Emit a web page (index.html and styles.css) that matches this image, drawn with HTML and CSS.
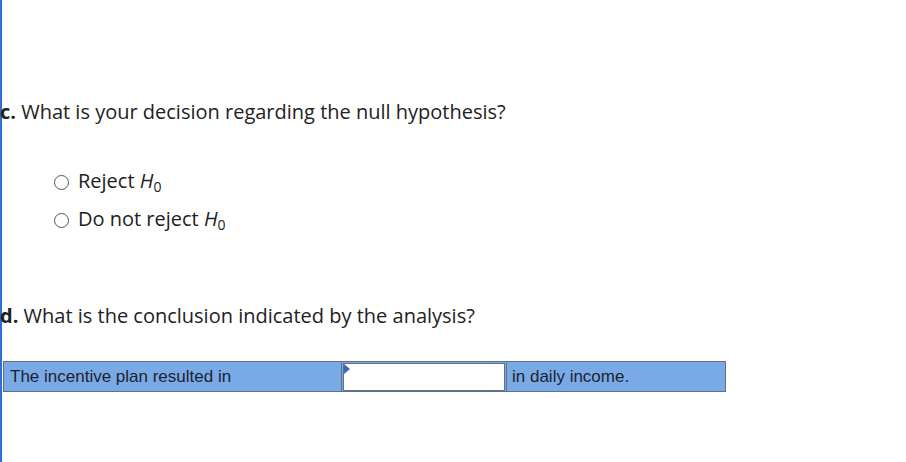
FILE: index.html
```html
<!DOCTYPE html>
<html>
<head>
<meta charset="utf-8">
<link rel="stylesheet" href="styles.css">
</head>
<body>
<div class="page">
  <div class="question q-c">
    <p class="prompt"><b>c.</b> What is your decision regarding the null hypothesis?</p>
    <ul class="options">
      <li class="option"><span class="radio"></span><span>Reject <i>H</i><sub>0</sub></span></li>
      <li class="option"><span class="radio"></span><span>Do not reject <i>H</i><sub>0</sub></span></li>
    </ul>
  </div>
  <div class="question q-d">
    <p class="prompt"><b>d.</b> What is the conclusion indicated by the analysis?</p>
    <div class="answer-row">
      <div class="cell cell-text cell-left">The incentive plan resulted in</div>
      <div class="cell cell-input"><span class="flag"></span></div>
      <div class="cell cell-text cell-right">in daily income.</div>
    </div>
  </div>
</div>
</body>
</html>
```

FILE: styles.css
```css
html, body {
  margin: 0;
  padding: 0;
  background: #ffffff;
}
.page {
  height: 462px;
  border-left: 2px solid #2f6fd6;
  box-sizing: border-box;
  font-family: "Open Sans", "Lato", sans-serif;
  color: #222;
  padding-top: 98px;
}
.prompt {
  margin: 0 0 0 -2px;
  font-size: 20px;
  line-height: 27px;
}
.prompt b {
  font-weight: 700;
}
.options {
  list-style: none;
  margin: 40px 0 0 52px;
  padding: 0;
}
.option {
  display: flex;
  align-items: center;
  gap: 9px;
  font-size: 20px;
  line-height: 38px;
  height: 38px;
}
.radio {
  width: 15px;
  height: 15px;
  border: 1px solid #555;
  border-radius: 50%;
  box-sizing: border-box;
  margin-top: -4px;
}
.option sub {
  font-size: 14px;
  vertical-align: -4px;
}
.q-d {
  margin-top: 61px;
}
.answer-row {
  display: flex;
  margin: 32px 0 0 1px;
  width: 723px;
  height: 31px;
  border: 1px solid #5f7088;
  box-sizing: border-box;
  background: #7aaae6;
  font-family: "Liberation Sans", Arial, sans-serif;
  font-size: 17px;
  color: #1c2330;
}
.cell {
  box-sizing: border-box;
}
.cell-left {
  width: 338px;
  padding: 5px 0 0 6px;
  border-right: 1px solid #5f7088;
}
.cell-input {
  position: relative;
  width: 162px;
  background: #fff;
  border: 1px solid #5f7088;
  margin: 1px 1px 0 1px;
  height: 28px;
}
.flag {
  position: absolute;
  left: 0;
  top: 0;
  width: 0;
  height: 0;
  border-top: 5px solid transparent;
  border-bottom: 5px solid transparent;
  border-left: 6px solid #3a67b8;
}
.cell-right {
  flex: 1;
  padding: 5px 0 0 5px;
  border-left: 1px solid #5f7088;
}
```
